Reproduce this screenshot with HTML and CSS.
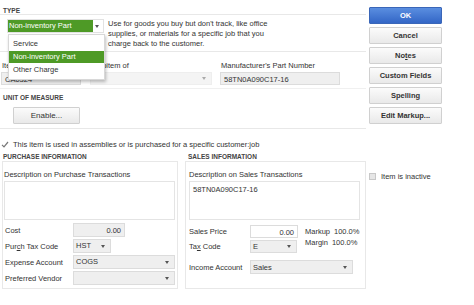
FILE: index.html
```html
<!DOCTYPE html>
<html lang="en">
<head>
    <meta charset="UTF-8">
    <title>Edit Item</title>
    <link rel="stylesheet" href="styles.css">
</head>
<body>
<div class="window">
    <div class="main">
        <!-- Type -->
        <div class="section-title type-title">TYPE</div>
        <div class="type-box">
            <div class="combo type-combo">
                <span class="combo-selected">Non-inventory Part</span>
                <span class="caret"></span>
            </div>
            <p class="type-desc">Use for goods you buy but don't track, like office supplies, or materials for a specific job that you charge back to the customer.</p>

            <ul class="type-menu">
                <li>Service</li>
                <li class="active">Non-inventory Part</li>
                <li>Other Charge</li>
            </ul>
        </div>

        <!-- Name row -->
        <div class="name-row">
            <div class="field name-field">
                <label>Item Name/Number</label>
                <div class="input grey">CA0324</div>
            </div>
            <div class="field subitem-field">
                <label>Subitem of</label>
                <div class="input grey combo"><span></span><span class="caret light"></span></div>
            </div>
            <div class="field part-field">
                <label>Manufacturer's Part Number</label>
                <div class="input grey">58TN0A090C17-16</div>
            </div>
        </div>

        <!-- Unit of measure -->
        <div class="section-title uom-title">UNIT OF MEASURE</div>
        <div class="uom-box">
            <button class="btn enable-btn">Enable...</button>
        </div>

        <div class="assembly-row">
            <span class="check checked">
                <svg width="8" height="7" viewBox="0 0 8 7"><path d="M1 3.8 L3 5.8 L7 1" fill="none" stroke="#777" stroke-width="1.2"/></svg>
            </span>
            <span>This item is used in assemblies or is purchased for a specific customer:job</span>
        </div>

        <div class="info">
            <div class="info-col">
                <div class="section-title">PURCHASE INFORMATION</div>
                <div class="info-box purchase-box">
                    <div class="desc-label">Description on Purchase Transactions</div>
                    <div class="textarea"></div>
                    <div class="form-grid">
                        <label>Cost</label>
                        <div class="input grey num cost-input">0.00</div>
                        <label>Pur<u>c</u>h Tax Code</label>
                        <div class="input grey combo tax-select"><span>HST</span><span class="caret"></span></div>
                        <label>Expense Account</label>
                        <div class="input grey combo wide-select"><span>COGS</span><span class="caret"></span></div>
                        <label>Preferred Vendor</label>
                        <div class="input grey combo wide-select"><span></span><span class="caret"></span></div>
                    </div>
                </div>
            </div>
            <div class="info-col">
                <div class="section-title">SALES INFORMATION</div>
                <div class="info-box sales-box">
                    <div class="desc-label">Description on Sales Transactions</div>
                    <div class="textarea">58TN0A090C17-16</div>
                    <div class="sales-grid">
                        <label>Sales Price</label>
                        <div class="input num price-input">0.00</div>
                        <div class="ratios">
                            <div><span>Markup</span><span>100.0%</span></div>
                            <div><span>Margin</span><span>100.0%</span></div>
                        </div>
                        <label>Ta<u>x</u> Code</label>
                        <div class="input grey combo tax-select"><span>E</span><span class="caret"></span></div>
                    </div>
                    <div class="income-row">
                        <label>Income Account</label>
                        <div class="input grey combo income-select"><span>Sales</span><span class="caret"></span></div>
                    </div>
                </div>
            </div>
        </div>
    </div>

    <div class="side">
        <button class="btn btn-ok">OK</button>
        <button class="btn">Cancel</button>
        <button class="btn">No<u>t</u>es</button>
        <button class="btn">Custom Fields</button>
        <button class="btn">Spelling</button>
        <button class="btn">Edit Markup...</button>

        <div class="inactive-row">
            <span class="check"></span>
            <span>Item is inactive</span>
        </div>
    </div>
</div>
</body>
</html>
```

FILE: styles.css
```css
body {
    margin: 0;
    background-color: #fff;
    font-family: "Liberation Sans", Arial, sans-serif;
    font-size: 7.5px;
    color: #333;
}

u {
    text-decoration: underline;
}

.window {
    display: flex;
    width: 474px;
    height: 305px;
    overflow: hidden;
}

.main {
    width: 366px;
    position: relative;
}

.section-title {
    font-size: 6.5px;
    font-weight: bold;
    color: #444;
    line-height: 7px;
    padding-left: 3px;
}

/* Type */
.type-title {
    padding-top: 7px;
}

.type-box {
    position: relative;
    display: flex;
    height: 38px;
    border-top: 1px solid #e8e8e8;
    border-bottom: 1px solid #e8e8e8;
    padding: 4px 0 0 7px;
    box-sizing: border-box;
}

.combo {
    display: flex;
    align-items: center;
    justify-content: space-between;
}

.type-combo {
    width: 97px;
    height: 14px;
    border: 1px solid #e2e2e2;
    box-sizing: border-box;
    padding: 0 4px 0 0;
}

.combo-selected {
    background-color: #4e9a26;
    color: #fff;
    height: 12px;
    line-height: 12px;
    width: 84px;
    padding-left: 1px;
}

.caret {
    width: 0;
    height: 0;
    border-left: 2.5px solid transparent;
    border-right: 2.5px solid transparent;
    border-top: 3px solid #555;
}

.caret.light {
    border-top-color: #aaa;
}

.type-desc {
    margin: 0 0 0 4px;
    width: 180px;
    line-height: 10px;
}

.type-menu {
    position: absolute;
    left: 8px;
    top: 19px;
    width: 95px;
    margin: 0;
    padding: 2px 0;
    list-style: none;
    background-color: #fff;
    border: 1px solid #d8d8d8;
    box-shadow: 1px 2px 3px rgba(0, 0, 0, 0.25);
    z-index: 2;
}

.type-menu li {
    height: 12px;
    line-height: 12px;
    padding-left: 4px;
    margin: 1px 0;
}

.type-menu li.active {
    background-color: #4e9a26;
    color: #fff;
}

/* Name row */
.name-row {
    display: flex;
    padding-top: 9px;
    height: 37px;
    box-sizing: border-box;
    border-bottom: 1px solid #f0f0f0;
}

.field label {
    display: block;
    height: 11px;
    line-height: 9px;
}

.input {
    height: 13px;
    line-height: 13px;
    border: 1px solid #dcdcdc;
    box-sizing: border-box;
    padding: 0 3px;
    background-color: #fff;
}

.input.grey {
    background-color: #efefef;
}

.input.combo {
    padding-right: 5px;
}

.num {
    text-align: right;
}

.name-field {
    width: 80px;
    padding-left: 1px;
}

.name-field label {
    padding-left: 1px;
}

.subitem-field {
    width: 122px;
    margin-left: 9px;
}

.subitem-field label {
    padding-left: 3px;
}

.subitem-field .input {
    background-color: #f4f4f4;
    border-color: #eeeeee;
}

.part-field {
    width: 120px;
    margin-left: 8px;
}

.part-field label {
    padding-left: 1px;
}

/* Unit of measure */
.uom-title {
    padding-top: 5px;
}

.uom-box {
    height: 28px;
    border-bottom: 1px solid #e8e8e8;
    padding: 6px 0 0 13px;
    box-sizing: border-box;
}

.btn {
    font-family: "Liberation Sans", Arial, sans-serif;
    font-size: 7.5px;
    font-weight: bold;
    color: #333;
    background: linear-gradient(#fbfbfb, #e9e9e9);
    border: 1px solid #d0d0d0;
    border-radius: 1px;
    padding: 0;
    cursor: pointer;
}

.enable-btn {
    width: 67px;
    height: 17px;
    font-weight: normal;
    font-size: 8px;
}

.assembly-row {
    display: flex;
    align-items: center;
    gap: 4px;
    height: 10px;
    margin-top: 10px;
    padding-left: 1px;
}

.check {
    display: inline-block;
    width: 7px;
    height: 7px;
    box-sizing: border-box;
    border: 1px solid #c8c8c8;
    background-color: #e6e6e6;
}

.check.checked {
    border: none;
    background: none;
    width: 8px;
}

/* Purchase / Sales */
.info {
    display: flex;
    margin-top: 4px;
}

.info-col:first-child {
    width: 181px;
}

.info-col:last-child {
    width: 184px;
    margin-left: 1px;
}

.info-col:last-child .section-title {
    padding-left: 6px;
}

.info-box {
    height: 128px;
    margin-top: 1px;
    border: 1px solid #e8e8e8;
    box-sizing: border-box;
}

.purchase-box {
    margin-left: 2px;
    margin-right: 3px;
    padding: 6px 2px 0 1px;
}

.sales-box {
    padding: 6px 5px 0 3px;
    margin-left: 3px;
}

.desc-label {
    height: 13px;
    line-height: 14px;
}

.textarea {
    height: 39px;
    border: 1px solid #e4e4e4;
    box-sizing: border-box;
    padding: 3px 0 0 7px;
}

.sales-box .textarea {
    padding-left: 3px;
}

.form-grid {
    display: grid;
    grid-template-columns: 69px auto;
    grid-auto-rows: 14px;
    row-gap: 2px;
    margin-top: 3px;
    align-items: center;
    justify-items: start;
}

.form-grid label {
    padding-left: 1px;
}

.form-grid .input {
    height: 14px;
    line-height: 14px;
}

.cost-input {
    width: 52px;
}

.tax-select {
    width: 38px;
    padding-left: 2px;
}

.wide-select {
    width: 102px;
    padding-left: 2px;
}

.sales-grid {
    display: grid;
    grid-template-columns: 61px 48px auto;
    grid-auto-rows: 14px;
    row-gap: 1px;
    margin-top: 4px;
    align-items: center;
    justify-items: start;
}

.price-input {
    width: 48px;
}

.sales-grid .tax-select {
    width: 47px;
}

.ratios {
    grid-row: span 2;
    align-self: start;
    padding-left: 7px;
    padding-top: 2px;
}

.ratios div {
    display: flex;
    gap: 4px;
    line-height: 11px;
}

.income-row {
    display: grid;
    grid-template-columns: 61px auto;
    align-items: center;
    margin-top: 7px;
}

.income-select {
    width: 103px;
    height: 14px;
    padding-left: 2px;
}

/* Side buttons */
.side {
    display: flex;
    flex-direction: column;
    gap: 3px;
    padding: 7px 0 0 3px;
}

.side .btn {
    width: 73px;
    height: 17px;
}

.side .btn-ok {
    background: linear-gradient(#5a8ee0, #3366c6);
    border-color: #3a66b8;
    color: #fff;
}

.inactive-row {
    display: flex;
    align-items: center;
    gap: 5px;
    margin-top: 45px;
}
```
